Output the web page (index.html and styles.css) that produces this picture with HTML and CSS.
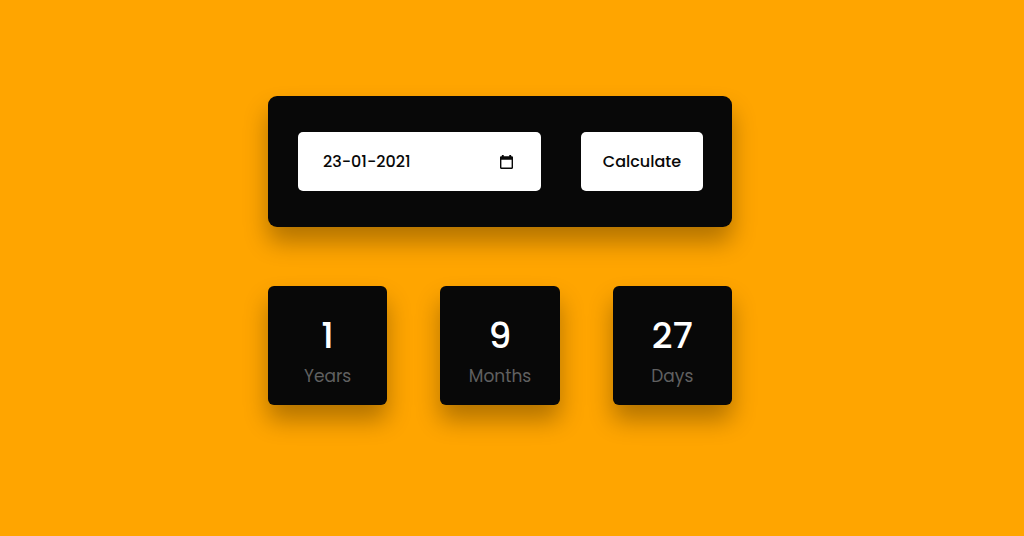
FILE: index.html
```html
<!DOCTYPE html>
<html lang="en">
<head>
  <meta charset="utf-8">
  <meta name="viewport" content="width=device-width, initial-scale=1">
  <title>Age Calculator</title>
  <link rel="stylesheet" href="styles.css">
</head>
<body>
  <main class="calculator">
    <form class="panel">
      <div class="date-field">
        <input class="date-input" type="text" value="23-01-2021" aria-label="Date of birth">
        <button class="picker" type="button" aria-label="Open calendar">
          <svg class="picker-icon" viewBox="0 0 14 15" aria-hidden="true">
            <path fill="#080808" fill-rule="evenodd" d="M2 0h2v1.300h6V0h2v1.300h.8Q14 1.300 14 2.500v11.300Q14 15 12.800 15H1.200Q0 15 0 13.800V2.500Q0 1.300 1.200 1.300H2zM1.500 5v8.500h11V5z"/>
          </svg>
        </button>
      </div>
      <button class="calculate" type="button">Calculate</button>
    </form>
    <section class="results" aria-label="Age">
      <div class="card"><span class="value">1</span><span class="unit">Years</span></div>
      <div class="card"><span class="value">9</span><span class="unit">Months</span></div>
      <div class="card"><span class="value">27</span><span class="unit">Days</span></div>
    </section>
  </main>
</body>
</html>
```
FILE: styles.css
```css
* {
  box-sizing: border-box;
  margin: 0;
}

body {
  display: flex;
  align-items: center;
  justify-content: center;
  min-height: 100vh;
  padding: 0 24px 35px 0;
  background: #ffa500;
  font-family: Poppins, Inter, "Liberation Sans", sans-serif;
}

.calculator {
  display: grid;
  grid-template-columns: minmax(0, 1fr);
  gap: 59px;
  width: 100%;
  max-width: 464px;
}

.panel,
.card {
  background: #080808;
  box-shadow: 0 15px 25px rgba(0, 0, 0, 0.3);
}

.panel {
  display: flex;
  gap: 40px;
  padding: 36px 29px 36px 30px;
  border-radius: 9px;
}

.date-field,
.calculate {
  border-radius: 5px;
  background: #fff;
}

.date-field {
  display: flex;
  flex: 1;
  align-items: center;
  min-width: 0;
  padding: 0 28px 0 25px;
}

.date-input,
.calculate {
  border: 0;
  color: #080808;
  font: 500 16px/27px Poppins, Inter, "Liberation Sans", sans-serif;
}

.date-input {
  flex: 1;
  min-width: 0;
  padding: 0;
  background: transparent;
}

.picker {
  padding: 0;
  border: 0;
  background: transparent;
}

.picker-icon {
  display: block;
  width: 13px;
  height: 14px;
}

.calculate {
  width: 122px;
  padding: 16px 0;
}

.results {
  display: grid;
  grid-template-columns: repeat(3, 1fr);
  gap: 53px;
}

.card {
  display: flex;
  flex-direction: column;
  align-items: center;
  padding: 24px 0 15px;
  border-radius: 6px;
}

.value {
  color: #fff;
  font-size: 36px;
  font-weight: 500;
  line-height: 52px;
}

.unit {
  color: #606060;
  font-size: 17px;
  line-height: 28px;
}
```
